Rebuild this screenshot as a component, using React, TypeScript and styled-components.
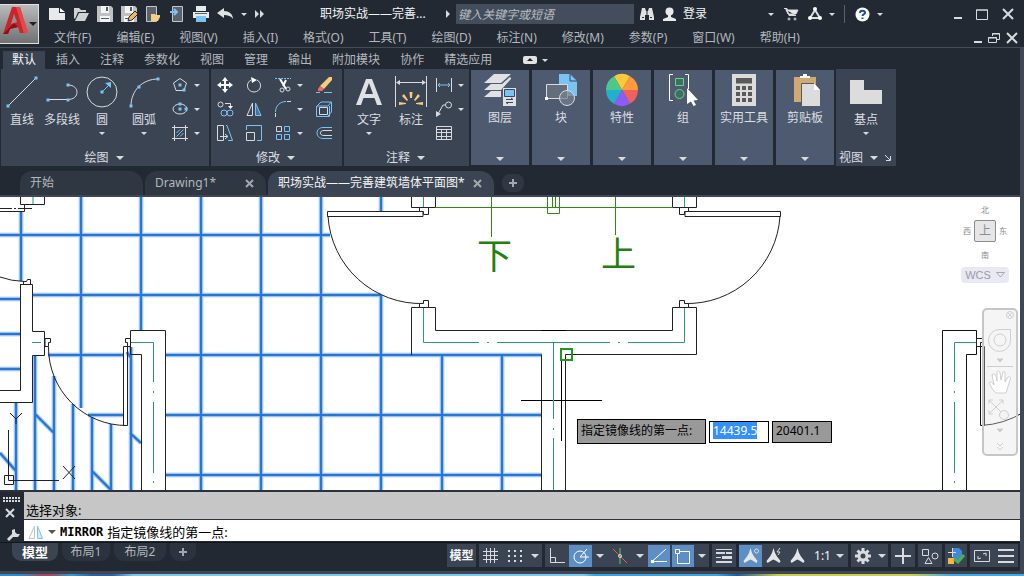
import React, { useEffect, useRef } from "react";
import styled, { createGlobalStyle, css } from "styled-components";

const c = {
  dark: "#222933",
  frame: "#3f4757",
  panel: "#3b4453",
  tile: "#4e5a70",
  text: "#dcdfe3",
  muted: "#b4b8be",
  line: "#d9dbde",
  blue: "#7cc3f5",
  active: "#5d8fc6",
};
const sans = `"Noto Sans", "Noto Sans CJK SC", sans-serif`;

const Global = createGlobalStyle`
  * { box-sizing: border-box; }
  body { margin: 0; background: ${c.dark}; }
  button, input { font: inherit; color: inherit; }
  button { background: none; border: 0; padding: 0; margin: 0; }
`;

const Page = styled.div`
  min-height: 100vh;
  display: flex;
  flex-direction: column;
  background: ${c.dark};
  color: ${c.text};
  font: 12px/16px ${sans};
  white-space: nowrap;
  overflow: hidden;
`;

/* ---------- primitives ---------- */
const Svg = styled.svg`
  display: block;
  flex: none;
  overflow: visible;
`;
type IconProps = { w?: number; h?: number; stroke?: string; children: React.ReactNode };
const Icon = ({ w = 16, h = 16, stroke = c.line, children }: IconProps) => (
  <Svg width={w} height={h} viewBox={`0 0 ${w} ${h}`} fill="none" stroke={stroke} aria-hidden="true">
    {children}
  </Svg>
);
const Dot = ({ x, y }: { x: number; y: number }) => (
  <rect x={x - 1.5} y={y - 1.5} width="3" height="3" fill={c.blue} stroke="none" />
);
const Caret = styled.i<{ $big?: boolean }>`
  display: block;
  flex: none;
  width: 0;
  height: 0;
  border-style: solid;
  border-color: ${c.line} transparent transparent;
  border-width: ${(p) => (p.$big ? "4px 4px 0" : "3px 3px 0")};
`;

/* ---------- header ---------- */
const Header = styled.header`
  display: flex;
  height: 48px;
  border-bottom: 1px solid #444c59;
`;
const AppButton = styled.button`
  width: 39px;
  height: 40px;
  margin-top: 4px;
  display: flex;
  align-items: center;
  border: 1px solid #e0e0e0;
  border-left: 0;
  background: linear-gradient(#b9babb, #8f9193 55%, #6f7173);
`;
const HeaderRows = styled.div`
  flex: 1;
  min-width: 0;
`;
const TitleBar = styled.div`
  display: flex;
  align-items: center;
  height: 28px;
  padding: 0 10px 0 10px;
`;
const QuickAccess = styled.div`
  display: flex;
  align-items: center;
  gap: 8px;
`;
const IconButton = styled.button`
  display: flex;
  align-items: center;
  justify-content: center;
`;
const DocTitle = styled.h1`
  margin: 0 0 0 55px;
  font: inherit;
  color: #f2f3f4;
  width: 126px;
`;
const Search = styled.input`
  width: 178px;
  height: 20px;
  margin: 0 6px 0 6px;
  padding: 0 2px;
  border: 0;
  border-radius: 0;
  background: #434d5b;
  &::placeholder { color: #b9bec5; opacity: 1; font-style: italic; }
`;
const Account = styled.button`
  display: flex;
  align-items: center;
  gap: 7px;
  margin-left: 9px;
  color: #f2f3f4;
`;
const TitleTools = styled.div`
  display: flex;
  align-items: center;
  gap: 7px;
  margin-left: 61px;
`;
const Sep = styled.span`
  width: 1px;
  height: 18px;
  margin: 0 3px 0 2px;
  background: #5a626e;
`;
const WinButtons = styled.div<{ $gap: number }>`
  display: flex;
  align-items: center;
  gap: ${(p) => p.$gap}px;
  margin-left: auto;
`;
const MenuBar = styled.nav`
  display: flex;
  align-items: center;
  height: 19px;
  gap: 25px;
  padding: 0 6px 0 15px;
  color: ${c.muted};
`;
const Link = styled.a`
  color: inherit;
  text-decoration: none;
`;

/* ---------- ribbon ---------- */
const Body = styled.div`
  flex: 1;
  display: flex;
  flex-direction: column;
  border-right: 4px solid ${c.frame};
`;
const RibbonTabs = styled.nav`
  display: flex;
  align-items: flex-end;
  height: 21px;
  padding-left: 3px;
  color: ${c.muted};
`;
const RibbonTab = styled.button<{ $on?: boolean }>`
  height: 18px;
  padding: 0 10px;
  ${(p) => p.$on && css`
    padding: 0 9px;
    margin-right: 1px;
    background: ${c.panel};
    color: #f4f5f6;
  `}
`;
const RibbonToggle = styled.button`
  display: flex;
  align-items: center;
  gap: 5px;
  height: 18px;
  margin-left: 21px;
`;
const Ribbon = styled.div`
  display: flex;
  gap: 2px;
  padding-left: 1px;
  height: 97px;
`;
const Panel = styled.section<{ $w: number }>`
  width: ${(p) => p.$w}px;
  display: flex;
  flex-direction: column;
  background: ${c.panel};
`;
const PanelBody = styled.div<{ $pad?: number }>`
  flex: 1;
  display: flex;
  padding-left: ${(p) => p.$pad ?? 0}px;
`;
const PanelTitle = styled.button`
  display: flex;
  align-items: center;
  justify-content: center;
  gap: 7px;
  height: 18px;
  padding: 2px 2px 0 0;
`;
const BigTool = styled.button<{ $w: number }>`
  width: ${(p) => p.$w}px;
  height: 72px;
  padding-top: 7px;
  display: flex;
  flex-direction: column;
  align-items: center;
  justify-content: flex-start;
  gap: 4px;
`;
const SmallGrid = styled.div<{ $cols: string; $pad?: number }>`
  display: grid;
  grid-template-columns: ${(p) => p.$cols};
  grid-auto-rows: 24px;
  align-content: start;
  padding: 4px 0 0 ${(p) => p.$pad ?? 0}px;
`;
const SmallTool = styled.button<{ $caret?: boolean }>`
  width: ${(p) => (p.$caret ? 10 : 24)}px;
  height: 24px;
  display: flex;
  align-items: center;
  justify-content: center;
`;
const Tiles = styled.div`
  display: flex;
  gap: 3px;
`;
const Tile = styled.button`
  width: 58px;
  margin: 1px 0;
  padding: 4px 0;
  display: flex;
  flex-direction: column;
  align-items: center;
  gap: 4px;
  background: ${c.tile};
  & > i { margin-top: auto; }
`;

/* ---------- document tabs ---------- */
const DocTabs = styled.nav`
  display: flex;
  gap: 2px;
  height: 31px;
  padding: 5px 0 0 20px;
  border-bottom: 2px solid ${c.frame};
`;
const DocTab = styled.div<{ $w: number; $on?: boolean }>`
  position: relative;
  width: ${(p) => p.$w}px;
  display: flex;
  align-items: center;
  justify-content: space-between;
  padding: 0 12px 0 10px;
  border-radius: 12px 14px 0 0;
  background: ${(p) => (p.$on ? c.panel : "#2f3743")};
  color: ${(p) => (p.$on ? "#f4f5f6" : c.muted)};
`;
const AddTab = styled.button`
  width: 22px;
  height: 18px;
  margin: 3px 0 0 6px;
  display: flex;
  align-items: center;
  justify-content: center;
  border-radius: 8px;
  background: #2f3743;
`;

/* ---------- canvas ---------- */
const Canvas = styled.main`
  position: relative;
  flex: 1;
  min-height: 293px;
  background: #fff;
  overflow: hidden;
`;
const Plan = styled.svg`
  position: absolute;
  inset: 0;
  width: 100%;
  height: 100%;
`;
const DynamicInput = styled.form`
  position: absolute;
  left: 577px;
  top: 222px;
  display: flex;
  align-items: center;
  gap: 3px;
  color: #000;
`;
const Prompt = styled.label`
  width: 129px;
  height: 25px;
  padding-left: 3px;
  line-height: 22px;
  border: 1px solid #000;
  background: #999;
`;
const Coord = styled.input<{ $on?: boolean }>`
  width: 60px;
  height: 22px;
  padding: 0 3px 2px;
  border: 1px solid #000;
  border-radius: 0;
  outline: 0;
  background: ${(p) => (p.$on ? "#fff" : "#999")};
  &::selection { background: #3390ff; color: #fff; }
`;
const ViewCube = styled.div`
  position: absolute;
  right: 11px;
  top: 4px;
  width: 48px;
  display: grid;
  grid-template-columns: 12px 24px 12px;
  grid-template-rows: 18px 24px 24px 16px;
  place-items: center;
  font-size: 8px;
  color: #8a8a8a;
  & > :nth-child(1), & > :nth-child(5) { grid-column: 1 / 4; }
`;
const CubeFace = styled.button`
  width: 22px;
  height: 22px;
  border: 1px solid #8c8c8c;
  border-radius: 2px;
  background: #e6e6e6;
  color: #8a8f96;
  font-size: 12px;
  line-height: 16px;
`;
const Wcs = styled.button`
  grid-column: 1 / 4;
  width: 48px;
  height: 16px;
  display: flex;
  align-items: center;
  justify-content: center;
  gap: 5px;
  border-radius: 4px;
  background: #e9e9f3;
  color: #9a9aa6;
  font: 11px/16px "Liberation Sans", sans-serif;
`;
const NavBar = styled.div`
  position: absolute;
  right: 2px;
  top: 111px;
  width: 36px;
  height: 148px;
  border: 2px solid #c6c6c6;
  border-radius: 5px;
  background: rgba(225, 225, 225, 0.35);
`;

/* ---------- command line ---------- */
const Command = styled.section`
  display: flex;
  height: 52px;
  border-top: 2px solid #2b323d;
  color: #000;
  font-size: 13px;
`;
const CommandGrip = styled.div`
  width: 24px;
  background: ${c.dark};
`;
const CommandLines = styled.div`
  flex: 1;
  display: flex;
  flex-direction: column;
`;
const History = styled.div`
  height: 28px;
  padding: 9px 0 0 2px;
  line-height: 18px;
  background: #c6c6c6;
  border-bottom: 1px solid #2b323d;
`;
const CommandInput = styled.label`
  height: 21px;
  display: flex;
  align-items: center;
  gap: 4px;
  padding: 2px 0 0 4px;
  background: #fff;
  b { font: bold 12px/18px "DejaVu Sans Mono", monospace; }
`;
const CommandField = styled.input`
  flex: 1;
  min-width: 0;
  border: 0;
  padding: 0;
  outline: 0;
  background: none;
`;

/* ---------- bottom bar ---------- */
const Bottom = styled.footer`
  display: flex;
  height: 29px;
  border-top: 1px solid #111720;
`;
const LayoutTabs = styled.nav`
  display: flex;
  gap: 4px;
  padding-left: 12px;
`;
const LayoutTab = styled.button<{ $on?: boolean; $w: number }>`
  width: ${(p) => p.$w}px;
  height: 18px;
  display: flex;
  align-items: center;
  justify-content: center;
  border-radius: 0 0 9px 9px;
  background: ${(p) => (p.$on ? c.panel : "#2b333f")};
  color: ${(p) => (p.$on ? "#fff" : c.muted)};
  ${(p) => p.$on && css`font-weight: bold; font-size: 13px;`}
`;
const Status = styled.div`
  display: flex;
  gap: 3px;
  margin-left: auto;
  padding: 1px 2px 4px 0;
`;
const Group = styled.div`
  display: flex;
  align-items: center;
  background: ${c.panel};
`;
const StatusButton = styled.button<{ $w?: number; $on?: boolean }>`
  width: ${(p) => p.$w ?? 24}px;
  height: 22px;
  display: flex;
  align-items: center;
  justify-content: center;
  gap: 5px;
  background: ${(p) => (p.$on ? c.active : "transparent")};
  color: #f4f5f6;
`;
const Snaps = styled.div`
  display: flex;
  gap: 2px;
`;
const FrameEdge = styled.div`
  height: 3px;
  background: ${c.frame};
`;
const Desktop = styled.div`
  height: 2px;
  background: linear-gradient(90deg, #2a8ccc 0 2%, #a04a60 4% 5%, #2aa0cc 7%, #2d5f9c 9% 11%, #7cc8ec 13% 57%, #3ba3dc 58% 70%, #1c5d96 72%, #c9cf4a 76% 89%, #3fa9e2 93%);
`;

/* ---------- drawing ---------- */
const Jamb = ({ d }: { d: string }) => <path d={d} stroke="#222" />;

const FloorPlan = () => {
  const grid =
    "M21 212V281M81 197V408M141 197V330M201 197V900M261 197V900M321 197V900M381 197V211M381 295V900M442 355V900M502 355V900" +
    "M0 235H330M33 295H381M48 355H124M165 355H542M88 415H124M165 415H542M165 475H542M0 299H20M0 334H20M0 369H20" +
    "M16 403V900M35 356V900M54 376V900M73 404V900M92 417V900M111 424V900M131 347V900M35 414L54 433M0 453L16 471M92 471L112 491M130 433L141 443M127 352L131 358";
  return (
    <Plan fill="none" aria-label="建筑墙体平面图">
      <g transform="translate(0 -197)">
        <path d={grid} stroke="#8fbcfa" strokeWidth="5" opacity="0.5" />
        <path d={grid} stroke="#5f9ff2" strokeWidth="3" opacity="0.8" />
        <path d={grid} stroke="#1f70cf" strokeWidth="2" opacity="0.9" />
        <g stroke="#222">
          <path d="M20.500 197V204.500H44.500V197M0 211.500H24.500V204M0 208.500H12M14 208.500H16M18 208.500H32" />
          <path d="M0 277Q11 281 24 281.500M20.500 284.500H32.500V331.500H44.500V355.500H32.500V402.500H0M20.500 284V390.500H0" />
          <path d="M48.500 347A78 78 0 0 0 127 425.500M123.500 346.500H127.500V425.500H123.500Z" />
          <path d="M130.500 347V330.500H165.500V900M130.500 347V354.500H141.500V900" />
          <path d="M8.500 430V480.500H59M4.500 475.500H13.500V484.500H4.500ZM10 413L16 419L22 413M16 419V424M63 466L75 479M75 466L63 479" />
          <path d="M411.500 197V207.500H435.500V197M327.500 211.500H423V216.500H327.500ZM328 216A93 93 0 0 0 424 303.500" />
          <path d="M541.500 900V355M411.500 355V307.500H435.500V330.500H672.500V307.500H696.500V354.500H565.500V900" />
          <path d="M672.500 197V207.500H696.500V197M780.500 211.500H685V216.500H780.500ZM780 216A93 93 0 0 1 684 303.500" />
          <path d="M561.500 361V441M541 330.500H566M521 400.500H602" stroke="#000" />
        </g>
        <Jamb d="M23.500 284V281.500H26.500L27.500 279.500H30.500V284" />
        <Jamb d="M45 338.500H50.500V342.500H48.500V346.500H45ZM130.500 338.500H125.500V342.500H127.500V346.500H130.500Z" />
        <g fill="#fff">
          <Jamb d="M419.500 207.500H428.500V214.500H423.500V211.500H419.500ZM419.500 307.500V303.500H423.500V300.500H428.500V307.500Z" />
          <Jamb d="M688.500 207.500H679.500V214.500H684.500V211.500H688.500ZM688.500 307.500V303.500H684.500V300.500H679.500V307.500Z" />
        </g>
        <path d="M942.500 900V330.500H976.500V354.500H966.500V900M980.500 346.500H984.500V425.500H980.500ZM981 425.500A90 90 0 0 0 1024 412" stroke="#111" />
        <Jamb d="M976.500 338.500H982.500V342.500H980.500V346.500H976.500Z" />
        <path
          stroke="#2c9a74"
          d="M33 197V204M32 342.500H41M131 342.500H153.500V382M153.500 391V393M153.500 402V473M153.500 481V483M423.500 197V207M423.500 308V342.500H479M487 342.500H489M497 342.500H610M618 342.500H620M628 342.500H684.500V308M684.500 197V207M553.500 342V419M553.500 428V430M553.500 438V900M976 342.500H954.500V382M954.500 391V393M954.500 402V473M954.500 481V483"
        />
        <path stroke="#2c8a14" d="M436 207.500H672M491.500 197V237M615.500 197V235M547.500 197V213.500H559.500V197M552.500 197V207.500H555.500V197" />
        <path stroke="#1d9a1d" strokeWidth="2" d="M561 349H572V360H561Z" />
        <g fill="#267f0c" fontFamily='"Noto Sans CJK SC", sans-serif' fontSize="35">
          <text x="477" y="269">下</text>
          <text x="601" y="267">上</text>
        </g>
      </g>
    </Plan>
  );
};

/* ---------- repeated glyphs ---------- */
const Close = ({ s = 10, stroke }: { s?: number; stroke?: string }) => (
  <Icon w={s} h={s} stroke={stroke}><path strokeWidth="2" d={`M1 1L${s - 1} ${s - 1}M${s - 1} 1L1 ${s - 1}`} /></Icon>
);
const Minimize = () => <Icon w={9} h={10}><path strokeWidth="2" d="M1 9H9" /></Icon>;
const Plus = ({ s = 8, stroke }: { s?: number; stroke?: string }) => (
  <Icon w={s} h={s} stroke={stroke}><path strokeWidth="2" d={`M0 ${s / 2}H${s}M${s / 2} 0V${s}`} /></Icon>
);
const Figure = ({ children }: { children?: React.ReactNode }) => (
  <Icon w={18} h={18}>
    <path d="M8.500 1L10 6L12 9.500L15.500 14L14.500 16L10.500 13.500L8.500 12.500L6.500 13.500L2.500 16L1.500 14L5 9.500L7 6Z" fill="#e4e6e8" stroke="none" />
    {children}
  </Icon>
);
const SaveShape = () => (
  <g stroke="none">
    <path d="M0 0H14L16 2V16H0Z" fill="#bfc1c4" />
    <path d="M4 0H12V7H4ZM3 10H13V16H3Z" fill="#f4f4f4" />
    <path d="M9 1H11V5H9ZM4 12H12V13H4Z" fill="#525a66" />
  </g>
);

const menus = ["文件(F)", "编辑(E)", "视图(V)", "插入(I)", "格式(O)", "工具(T)", "绘图(D)", "标注(N)", "修改(M)", "参数(P)", "窗口(W)", "帮助(H)"];
const ribbonTabs = ["默认", "插入", "注释", "参数化", "视图", "管理", "输出", "附加模块", "协作", "精选应用"];
const wheel = ["#ffc83a", "#ff9a3c", "#f0605c", "#8b5cf6", "#22b0cc", "#4cc98a"];

const tiles: [string, React.ReactNode][] = [
  ["图层", <Icon w={32} h={32}>
    <g fill="#dfe1e4" stroke="none">
      <path d="M10 0H27L17 9H0Z" /><path d="M7 10H18L26 3L27 4V5L17 16H0Z" /><path d="M7 17H17V23H0Z" /><path d="M19 14H32V32H19Z" />
    </g>
    <path d="M20.500 15.500H30.500V22.500H20.500Z" fill={c.blue} stroke="#39465a" /><path stroke="#39465a" d="M22 25.500H29L27 24M29 28.500H22L24 30" />
  </Icon>],
  ["块", <Icon w={32} h={32}>
    <path d="M14 0H25L32 7V22H14Z" fill={c.blue} stroke="none" /><path d="M25 0V7H32" stroke="#39465a" />
    <path d="M1.500 10.500H22.500V24.500H1.500Z" fill="#646d7c" /><circle cx="22" cy="24" r="7.500" fill="#77808fb0" /><rect x="0" y="23" width="3" height="3" fill="#fff" stroke="none" />
  </Icon>],
  ["特性", <Icon w={32} h={32}>
    {wheel.map((fill, i) => {
      const p = (a: number) => `${16 + 16 * Math.sin(a)} ${16 - 16 * Math.cos(a)}`;
      const a = ((i * 60 - 30) * Math.PI) / 180;
      return <path key={fill} fill={fill} stroke="none" d={`M16 16L${p(a)}A16 16 0 0 1 ${p(a + Math.PI / 3)}Z`} />;
    })}
  </Icon>],
  ["组", <Icon w={32} h={32}>
    <path stroke="#fff" d="M6 .5H2.500V26.500H6M18 .5H21.500V15" /><path stroke="#6fd08c" fill="#3f6f60" d="M8.500 4.500H16.500V11.500H8.500Z" /><circle cx="12.500" cy="20" r="4.500" stroke="#6fd08c" fill="#3f6f60" />
    <path d="M20 14L31 26L26.500 26.500L29 31L26.500 32L24 27.500L20 30Z" fill="#fff" stroke="none" />
  </Icon>],
  ["实用工具", <Icon w={32} h={32}>
    <path d="M4 0H28V32H4Z" fill="#dcdcdc" stroke="none" /><path d="M8 4H24V9.500H8Z" fill="#5a5a5a" stroke="none" />
    <path stroke="#5a5a5a" strokeWidth="4" strokeDasharray="4 2" d="M8 14H24M8 20H24M8 26H24" />
  </Icon>],
  ["剪贴板", <Icon w={32} h={32}>
    <path d="M5 3H27V28H5Z" fill="#d3a871" stroke="none" /><path d="M11 4V2H14V0H18V2H21V4Z" fill="#fff" stroke="none" />
    <path d="M12.500 9.500H25L31.500 16V32.500H12.500Z" fill="#dcdcdc" stroke="#4e5a70" /><path d="M25 9V16H31Z" fill="#fff" stroke="none" />
  </Icon>],
];

export default function App() {
  const first = useRef<HTMLInputElement>(null);
  useEffect(() => {
    first.current?.focus();
    first.current?.select();
  }, []);
  return (
    <Page>
      <Global />
      <Header>
        <AppButton aria-label="应用程序菜单">
          <Icon w={38} h={36}>
            <g stroke="none">
              <path d="M3 28L12 1H20L27 27H20L18 21L10 23L8 28Z" fill="#c9252b" /><path d="M14 8L11 18L17 16Z" fill="#8f9193" /><path d="M3 28L14 17L18 21L10 23L8 28Z" fill="#8d1016" /><path d="M16 1H20L28 26L24 28Z" fill="#e4484a" />
              <path d="M29 16H37L33 20Z" fill="#222" />
            </g>
          </Icon>
        </AppButton>
        <HeaderRows>
          <TitleBar>
            <QuickAccess>
              <IconButton aria-label="新建"><Icon><path d="M0 2H10V7H16V14H0Z" fill="#e8e9ea" stroke="none" /><path d="M11 2L16 6H11Z" fill="#fff" stroke="none" /></Icon></IconButton>
              <IconButton aria-label="打开"><Icon><path d="M1 12V2H6L8 4H13V6H5L2 13ZM6 7H16L12 15H2Z" fill="#d0d2d4" stroke="none" /></Icon></IconButton>
              <IconButton aria-label="保存"><Icon><SaveShape /></Icon></IconButton>
              <IconButton aria-label="另存为"><Icon><SaveShape /><path d="M7 15L8 11L14 5L17 8L11 14Z" fill="#f2b75c" stroke="#222933" /></Icon></IconButton>
              <IconButton aria-label="从移动设备打开"><Icon><path d="M1.500 .5H11.500V15.500H1.500Z" fill="#5b626c" stroke="#c4c6c9" /><path d="M6 15V8H10L11 9H15V11L13 15Z" fill="#f2cf85" stroke="none" /></Icon></IconButton>
              <IconButton aria-label="保存到移动设备"><Icon><path d="M3.500 .5H13.500V15.500H3.500Z" fill="#5b626c" stroke="#c4c6c9" /><path d="M1 6H7M5 3L8 6L5 9" stroke={c.blue} strokeWidth="2" /></Icon></IconButton>
              <IconButton aria-label="打印"><Icon><g stroke="none"><path d="M3 0H13V5H3ZM0 6H16V12H0Z" fill="#e8e9ea" /><path d="M3 10H13V16H3Z" fill={c.blue} /><path d="M2 7H14V8H2Z" fill="#5b626c" /></g></Icon></IconButton>
              <IconButton aria-label="放弃"><Icon><path d="M0 7L7 2V5C12 5 16 8 16 13C14 10 11 9 7 9V12Z" fill="#e0e2e4" stroke="none" /></Icon></IconButton>
              <Caret />
              <IconButton aria-label="更多"><Icon w={10} h={8}><path d="M0 0L4 4L0 8ZM5 0L9 4L5 8Z" fill={c.line} stroke="none" /></Icon></IconButton>
            </QuickAccess>
            <DocTitle>职场实战——完善...</DocTitle>
            <Icon w={4} h={8}><path d="M0 0L4 4L0 8Z" fill={c.line} stroke="none" /></Icon>
            <Search aria-label="搜索" placeholder="键入关键字或短语" />
            <IconButton aria-label="查找"><Icon w={14} h={14}><path fill="#e0e2e4" stroke="none" d="M2 1H5L6 4H8L9 1H12L14 10V13H9V8H5V13H0V10Z" /><path stroke="#222933" d="M2 10.500H4M10 10.500H12M7 4V8" /></Icon></IconButton>
            <Account>
              <Icon w={13} h={14}><circle cx="6.500" cy="4.500" r="4" fill="#e8e9ea" stroke="none" /><path d="M0 14V12L5 10V8H8V10L13 12V14Z" fill="#e8e9ea" stroke="none" /></Icon>登录
            </Account>
            <TitleTools>
              <Caret />
              <IconButton aria-label="应用商店"><Icon w={20} h={14}><path d="M3 1.500H6L8 8.500H15M5 3H17L15 7H7Z" fill="#e8e9ea" /><circle cx="8" cy="12" r="1" /><circle cx="14" cy="12" r="1" /></Icon></IconButton>
              <IconButton aria-label="保持连接"><Icon w={14} h={14}><path strokeWidth="2" d="M7 3L2 11H12Z" /><g fill="#fff" stroke="none"><circle cx="7" cy="2" r="2" /><circle cx="2" cy="11" r="2" /><circle cx="12" cy="11" r="2" /></g></Icon></IconButton>
              <Caret />
              <Sep />
              <IconButton aria-label="帮助"><Icon w={15} h={15}><circle cx="7.500" cy="7.500" r="7" fill="#fff" stroke="none" /><path stroke="#1d4f93" strokeWidth="2" d="M5 6C5 3 10 3 10 6C10 7 7.500 7.500 7.500 9M7.500 10.500V12" /></Icon></IconButton>
              <Caret />
            </TitleTools>
            <WinButtons $gap={14}>
              <IconButton aria-label="最小化"><Minimize /></IconButton>
              <IconButton aria-label="最大化"><Icon w={12} h={11}><path d="M.5 1H11.500V10.500H.5Z" strokeWidth="1" /><path d="M0 1H12" /></Icon></IconButton>
              <IconButton aria-label="关闭"><Close s={12} /></IconButton>
            </WinButtons>
          </TitleBar>
          <MenuBar>
            {menus.map((m) => <Link href="#" key={m}>{m}</Link>)}
            <WinButtons $gap={6}>
              <IconButton aria-label="最小化图形"><Minimize /></IconButton>
              <IconButton aria-label="还原图形"><Icon w={12} h={12}><path d="M4.500 4V1.500H11.500V7.500H8M1 5.500H8.500V10.500H.5V5.500Z" strokeWidth="1" /><path d="M4 2H12M0 6H9" /></Icon></IconButton>
              <IconButton aria-label="关闭图形"><Close s={12} /></IconButton>
            </WinButtons>
          </MenuBar>
        </HeaderRows>
      </Header>

      <Body>
        <RibbonTabs>
          {ribbonTabs.map((t, i) => <RibbonTab key={t} $on={i === 0}>{t}</RibbonTab>)}
          <RibbonToggle aria-label="最小化功能区">
            <Icon w={14} h={8}><rect width="14" height="8" rx="2" fill="#e0e2e4" stroke="none" /><path d="M4 5L7 2L10 5Z" fill="#222" stroke="none" /></Icon><Caret />
          </RibbonToggle>
        </RibbonTabs>
        <Ribbon>
          <Panel $w={208}>
            <PanelBody $pad={1}>
              <BigTool $w={40}><Icon w={32} h={32}><path d="M2 30L30 2" /><Dot x={2} y={30} /><Dot x={30} y={2} /></Icon>直线</BigTool>
              <BigTool $w={40}><Icon w={32} h={32}><path d="M2 23.500H22C34 23.500 34 9 22 9" /><Dot x={2} y={24} /><Dot x={22} y={24} /><Dot x={22} y={9} /></Icon>多段线</BigTool>
              <BigTool $w={40}><Icon w={32} h={32}><circle cx="16" cy="16" r="15" /><path stroke={c.blue} d="M16 16L23 9" /><path d="M25 6V12L19 7Z" fill={c.blue} stroke="none" /><Dot x={16} y={16} /></Icon>圆<Caret /></BigTool>
              <BigTool $w={44}><Icon w={32} h={32}><path d="M3 30C3 14 15 3 30 3" /><Dot x={3} y={30} /><Dot x={11} y={11} /><Dot x={30} y={3} /></Icon>圆弧<Caret /></BigTool>
              <SmallGrid $cols="24px 10px" $pad={2}>
                <SmallTool aria-label="多边形"><Icon><path d="M8 1.500L14.500 6L12 13.500H4L1.500 6Z" /><Dot x={8} y={8} /><Dot x={12} y={13} /></Icon></SmallTool><SmallTool $caret aria-label="多边形选项"><Caret /></SmallTool>
                <SmallTool aria-label="椭圆"><Icon><ellipse cx="8" cy="8" rx="7" ry="5" /><Dot x={8} y={3} /><Dot x={8} y={8} /><Dot x={14} y={8} /></Icon></SmallTool><SmallTool $caret aria-label="椭圆选项"><Caret /></SmallTool>
                <SmallTool aria-label="图案填充"><Icon><path d="M0 2.500H16M0 13.500H16M2.500 0V16M13.500 0V16" /><path stroke={c.blue} d="M4.500 8L8 4.500M4.500 11.500L11.500 4.500M8 11.500L11.500 8" /></Icon></SmallTool><SmallTool $caret aria-label="填充选项"><Caret /></SmallTool>
              </SmallGrid>
            </PanelBody>
            <PanelTitle>绘图<Caret $big /></PanelTitle>
          </Panel>

          <Panel $w={131}>
            <PanelBody $pad={2}>
              <SmallGrid $cols="29px 29px 24px 17px 24px">
                <SmallTool aria-label="移动"><Icon><path strokeWidth="2" stroke="#fff" d="M8 3V13M3 8H13" /><path d="M8 0L11 4H5ZM8 16L11 12H5ZM0 8L4 5V11ZM16 8L12 5V11Z" fill="#fff" stroke="none" /></Icon></SmallTool>
                <SmallTool aria-label="旋转"><Icon><path d="M5 3C-1 6 1 15 8 15C15 15 17 6 11 3" /><path d="M5 0L11 3L6 6Z" fill="#fff" stroke="none" /></Icon></SmallTool>
                <SmallTool aria-label="修剪"><Icon><path stroke={c.blue} strokeDasharray="2 1" d="M0 1.500H16" /><path strokeWidth="2" stroke="#fff" d="M5 2L11 12M11 3L8 9" /><circle cx="7" cy="13" r="2" /><circle cx="13" cy="12" r="2" /></Icon></SmallTool>
                <SmallTool $caret aria-label="修剪选项"><Caret /></SmallTool>
                <SmallTool aria-label="删除"><Icon><path d="M13 0H16V3L8 12L4 9Z" fill="#f6cd7b" stroke="none" /><path d="M4 9L8 12L6 14H2V12Z" fill="#ef6a6a" stroke="none" /><path stroke={c.blue} d="M0 15.500H4M8 15.500H16" /></Icon></SmallTool>
                <SmallTool aria-label="复制"><Icon><circle cx="3.500" cy="3.500" r="2.500" /><circle cx="7" cy="12" r="3" stroke={c.blue} /><circle cx="13" cy="12" r="3" stroke={c.blue} /><path d="M8 2.500H13.500V5" /><path d="M11 5H16L13.500 8Z" fill="#fff" stroke="none" /></Icon></SmallTool>
                <SmallTool aria-label="镜像"><Icon><path d="M6.500 2V14.500H1Z" /><path stroke={c.blue} fill="#43749a" d="M9.500 2V14.500H15Z" /></Icon></SmallTool>
                <SmallTool aria-label="圆角"><Icon><path d="M.5 16V12M16 .5H12" /><path stroke={c.blue} d="M.5 11C.5 5 5 .5 11 .5" /></Icon></SmallTool>
                <SmallTool $caret aria-label="圆角选项"><Caret /></SmallTool>
                <SmallTool aria-label="分解"><Icon><path stroke={c.blue} d="M1 5L5 1H15.500V11L12 15M1 5H12L15 1" /><path d="M3.500 6.500H11.500V13.500H3.500Z" /><path stroke={c.blue} d="M.5 5V15.500H13.500V5" /></Icon></SmallTool>
                <SmallTool aria-label="拉伸"><Icon><path d="M.5 .5H6.500V15.500H.5ZM3 11.500H10M8 9L11 11.500L8 14" /><path stroke={c.blue} d="M9 .5H10L15.500 15.500H11" /></Icon></SmallTool>
                <SmallTool aria-label="缩放"><Icon><path d="M.5 7.500H8.500V15.500H.5Z" /><path stroke={c.blue} d="M.5 5V.5H15.500V15.500H11" /></Icon></SmallTool>
                <SmallTool aria-label="阵列"><Icon><path d="M1.500 1.500H6.500V6.500H1.500Z" /><path stroke={c.blue} d="M9.500 1.500H14.500V6.500H9.500ZM1.500 9.500H6.500V14.500H1.500ZM9.500 9.500H14.500V14.500H9.500Z" /></Icon></SmallTool>
                <SmallTool $caret aria-label="阵列选项"><Caret /></SmallTool>
                <SmallTool aria-label="偏移"><Icon><path stroke={c.blue} d="M16 2.500H7C-1 2.500-1 13.500 7 13.500H16" /><path d="M16 5.500H8C3 5.500 3 10.500 8 10.500H16" /></Icon></SmallTool>
              </SmallGrid>
            </PanelBody>
            <PanelTitle>修改<Caret $big /></PanelTitle>
          </Panel>

          <Panel $w={125}>
            <PanelBody $pad={4}>
              <BigTool $w={42}><Icon w={32} h={32}><path d="M3 29L13 3H19L29 29H24L21.500 22H10.500L8 29ZM12 18H20L16 7Z" fill="#dfe1e4" stroke="none" /></Icon>文字<Caret /></BigTool>
              <BigTool $w={42}>
                <Icon w={32} h={32}><path d="M.5 0V31M31.500 0V31M2 6.500H30" /><path d="M1 6.500L5 4V9ZM31 6.500L27 4V9Z" fill={c.line} stroke="none" /><g fill="#f6cd7b" stroke="none"><path d="M14.500 16H17.500L17 22H15ZM7 20L9 18L13 24L12 25ZM25 20L23 18L19 24L20 25ZM4 26L11 27V28L4 29ZM28 26L21 27V28L28 29Z" /></g></Icon>标注
              </BigTool>
              <SmallGrid $cols="24px 10px">
                <SmallTool aria-label="线性标注"><Icon><path d="M.5 1V15M15.500 1V15" /><path stroke={c.blue} d="M2 8H14M4 6L2 8L4 10M12 6L14 8L12 10" /></Icon></SmallTool><SmallTool $caret aria-label="标注选项"><Caret /></SmallTool>
                <SmallTool aria-label="引线"><Icon><circle cx="12.500" cy="4" r="3" /><path d="M9 4H7L2 13" /><path d="M0 16V10L5 13Z" fill={c.line} stroke="none" /></Icon></SmallTool><SmallTool $caret aria-label="引线选项"><Caret /></SmallTool>
                <SmallTool aria-label="表格"><Icon><path d="M.5 1.500H15.500V14.500H.5ZM0 4.500H16M0 7.500H16M0 11.500H16M5.500 5V14M10.500 5V14" /></Icon></SmallTool>
              </SmallGrid>
            </PanelBody>
            <PanelTitle>注释<Caret $big /></PanelTitle>
          </Panel>

          <Tiles>
            {tiles.map(([name, icon]) => <Tile key={name}>{icon}{name}<Caret $big /></Tile>)}
          </Tiles>

          <Panel $w={60}>
            <PanelBody>
              <BigTool $w={60}><Icon w={32} h={32}><path d="M0 4H14V14H32V28H0Z" fill="#dcdcdc" stroke="none" /></Icon>基点<Caret /></BigTool>
            </PanelBody>
            <PanelTitle>视图<Caret $big /><Icon w={6} h={6}><path d="M0 0L5 5M5.500 1V5.500H1" /></Icon></PanelTitle>
          </Panel>
        </Ribbon>

        <DocTabs>
          <DocTab $w={123}><Link href="#">开始</Link></DocTab>
          <DocTab $w={121}><Link href="#">Drawing1*</Link><IconButton aria-label="关闭 Drawing1"><Close s={9} stroke="#a4a8ae" /></IconButton></DocTab>
          <DocTab $w={226} $on><Link href="#">职场实战——完善建筑墙体平面图*</Link><IconButton aria-label="关闭当前图形"><Close s={9} stroke="#a4a8ae" /></IconButton></DocTab>
          <AddTab aria-label="新图形"><Plus stroke="#a4a8ae" /></AddTab>
        </DocTabs>

        <Canvas>
          <FloorPlan />
          <DynamicInput>
            <Prompt htmlFor="coord-x">指定镜像线的第一点:</Prompt>
            <Coord id="coord-x" ref={first} $on defaultValue="14439.5" />
            <Coord aria-label="Y" defaultValue="20401.1" />
          </DynamicInput>
          <ViewCube>
            <span>北</span>
            <span>西</span><CubeFace>上</CubeFace><span>东</span>
            <span>南</span>
            <Wcs>WCS<Icon w={9} h={6}><path stroke="#a9a9b4" d="M.5 .5H8.500L4.500 5Z" /></Icon></Wcs>
          </ViewCube>
          <NavBar role="toolbar" aria-label="导航栏">
            <Svg width="32" height="144" fill="none" stroke="#cfcfcf" aria-hidden="true">
              <circle cx="26" cy="5" r="3.500" /><path d="M24 3L28 7M28 3L24 7" />
              <path d="M26.500 19.500V30A11 11 0 1 1 16 19.500Z" /><circle cx="16" cy="30" r="6" /><path d="M13 49H19L16 52Z" fill="#c9c9c9" /><path d="M3 56.500H29" />
              <path fill="#fff" d="M9 80L5 73C6 71 8 72 10 75L8 65C9 63 11 64 12 66L13 71L13 62C14 60 16 61 16 63L17 70L19 62C20 61 22 62 21 64L21 72L24 67C26 66 27 68 26 70L22 83H12Z" />
              <path d="M5 90L19 104M19 90L5 104M5 94V90H9M15 90H19V94M5 100V104H9" /><circle cx="20" cy="105" r="4.500" fill="#f3f3f3" /><path d="M13 119H19L16 122Z" fill="#c9c9c9" /><path d="M13 133L16 136L19 133M13 137L16 140L19 137" />
            </Svg>
          </NavBar>
        </Canvas>

        <Command>
          <CommandGrip>
            <Icon w={24} h={50}>
              <path strokeWidth="2" strokeDasharray="2 1" d="M3 6H20M3 9H20" /><path strokeWidth="2" d="M6 17L14 25M14 17L6 25" />
              <path d="M8 48L14 42" strokeWidth="3" /><path d="M12 43V38L15 37V40L17 42H20L18 45H13Z" fill={c.line} stroke="none" />
            </Icon>
          </CommandGrip>
          <CommandLines>
            <History>选择对象:</History>
            <CommandInput>
              <Icon><path d="M6.500 2V14.500H1Z" stroke="#c4c4c4" /><path stroke="#7cc3f5" fill="#d4ecfc" d="M9.500 2V14.500H14.500Z" /></Icon>
              <Icon w={8} h={4}><path d="M0 0H8L4 4Z" fill="#555" stroke="none" /></Icon>
              <b>MIRROR</b><span>指定镜像线的第一点:</span><CommandField aria-label="命令" />
            </CommandInput>
          </CommandLines>
        </Command>

        <Bottom>
          <LayoutTabs>
            <LayoutTab $w={46} $on>模型</LayoutTab>
            <LayoutTab $w={48}>布局1</LayoutTab>
            <LayoutTab $w={52}>布局2</LayoutTab>
            <LayoutTab $w={26} aria-label="新建布局"><Plus stroke="#a4a8ae" /></LayoutTab>
          </LayoutTabs>
          <Status>
            <Group><StatusButton $w={29}><b>模型</b></StatusButton></Group>
            <Group>
              <StatusButton aria-label="栅格"><Icon><path d="M3.500 0V15M7.500 0V15M11.500 0V15M0 3.500H15M0 7.500H15M0 11.500H15" /></Icon></StatusButton>
              <StatusButton aria-label="捕捉"><Icon w={14} h={14}><path strokeWidth="2" strokeDasharray="2 4" d="M0 2H14M0 7H14M0 12H14" /></Icon></StatusButton>
              <StatusButton $w={15} aria-label="捕捉选项"><Caret $big /></StatusButton>
            </Group>
            <Group>
              <StatusButton aria-label="正交"><Icon><path d="M1.500 0V14.500H16M2 9.500H6.500V14" /></Icon></StatusButton>
              <StatusButton $w={23} $on aria-label="极轴追踪"><Icon stroke="#fff"><circle cx="7" cy="9" r="6" /><path d="M14 1L7 9H16" /></Icon></StatusButton>
              <StatusButton $w={16} aria-label="极轴选项"><Caret $big /></StatusButton>
              <StatusButton aria-label="等轴测草图"><Icon><path stroke="#e0605c" d="M1 1L15 15" /><path stroke="#62c56c" d="M8 0V16" /><circle cx="8" cy="8" r="1.500" /></Icon></StatusButton>
              <StatusButton $w={16} aria-label="草图选项"><Caret $big /></StatusButton>
              <Snaps>
                <StatusButton $w={22} $on aria-label="对象捕捉追踪"><Icon stroke="#fff"><path d="M15 1L1 13.500H16" /><path d="M0 12H3V15H0Z" fill="#fff" stroke="none" /></Icon></StatusButton>
                <StatusButton $w={22} $on aria-label="对象捕捉"><Icon stroke="#fff" w={18}><path d="M6 3.500H15.500V15.500H3.500V6" /><path d="M1.500 1.500H5.500V5.500H1.500Z" /></Icon></StatusButton>
              </Snaps>
              <StatusButton $w={15} aria-label="捕捉设置"><Caret $big /></StatusButton>
            </Group>
            <Group><StatusButton aria-label="线宽"><Icon><path d="M0 1.500H16" /><path strokeWidth="2" d="M0 5H9M10 5H16" /><path strokeWidth="3" d="M6 9.500H16" /><path d="M0 9.500H5" /><path strokeWidth="2" d="M0 14H16" /></Icon></StatusButton></Group>
            <Group>
              <StatusButton $w={23} $on aria-label="注释可见性"><Figure><circle cx="14.500" cy="4" r="2" /></Figure></StatusButton>
              <StatusButton aria-label="自动缩放"><Figure><path d="M15 1L12 5H15L13 8" /></Figure></StatusButton>
              <StatusButton aria-label="注释比例图标"><Figure /></StatusButton>
              <StatusButton $w={38}>1:1<Caret $big /></StatusButton>
            </Group>
            <Group>
              <StatusButton aria-label="切换工作空间"><Icon><circle cx="8" cy="8" r="4" strokeWidth="3" /><path strokeWidth="3" d="M8 0V3M8 13V16M0 8H3M13 8H16M2.500 2.500L4.500 4.500M11.500 11.500L13.500 13.500M13.500 2.500L11.500 4.500M4.500 11.500L2.500 13.500" /></Icon></StatusButton>
              <StatusButton $w={13} aria-label="工作空间选项"><Caret $big /></StatusButton>
            </Group>
            <Group><StatusButton aria-label="注释监视器"><Plus s={16} /></StatusButton></Group>
            <Group><StatusButton aria-label="隔离对象"><Icon><path d="M.5 1.500H6.500V7.500H.5ZM3 15.500H10L6.500 9.500Z" /><circle cx="13" cy="8" r="3" /></Icon></StatusButton></Group>
            <Group><StatusButton $w={22} aria-label="硬件加速"><Icon><path d="M5 0H11L14 3V12H5Z" fill="#3e8ad8" stroke="none" /><path d="M0 4.500H8M4.500 0V9" /><path d="M0 10H6V16H0Z" fill="#f6b73c" stroke="none" /><path stroke="#4caf50" strokeWidth="3" d="M6 11L10 14L16 7" /></Icon></StatusButton></Group>
            <Group>
              <StatusButton aria-label="全屏显示"><Icon><path d="M.5 2.500H15.500V13.500H.5ZM9 6L12 5V8M7 10L4 11V8" /></Icon></StatusButton>
              <StatusButton aria-label="自定义"><Icon><path strokeWidth="2" d="M0 2H16M0 8H16M0 14H16" /></Icon></StatusButton>
            </Group>
          </Status>
        </Bottom>
      </Body>
      <FrameEdge />
      <Desktop />
    </Page>
  );
}
